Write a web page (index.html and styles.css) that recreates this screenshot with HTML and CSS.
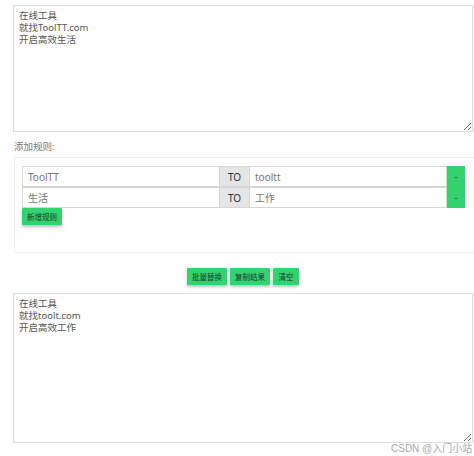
FILE: index.html
```html
<!DOCTYPE html>
<html lang="zh">
  <head>
    <meta charset="UTF-8" />
    <meta name="viewport" content="width=device-width, initial-scale=1.0" />
    <title>批量替换</title>
    <link rel="stylesheet" href="styles.css">
  </head>
  <body>
    <div class="container">
      <textarea class="text-box source">在线工具
就找ToolTT.com
开启高效生活</textarea>

      <div class="label">添加规则:</div>

      <div class="rules">
        <div class="rule-row">
          <input class="rule-input" type="text" value="ToolTT" />
          <span class="addon">TO</span>
          <input class="rule-input" type="text" value="tooltt" />
          <button class="remove-btn">-</button>
        </div>
        <div class="rule-row">
          <input class="rule-input" type="text" value="生活" />
          <span class="addon">TO</span>
          <input class="rule-input" type="text" value="工作" />
          <button class="remove-btn">-</button>
        </div>
        <button class="btn add-btn">新增规则</button>
      </div>

      <div class="actions">
        <button class="btn">批量替换</button>
        <button class="btn">复制结果</button>
        <button class="btn">清空</button>
      </div>

      <textarea class="text-box result">在线工具
就找toolt.com
开启高效工作</textarea>
    </div>
    <div class="watermark">CSDN @入门小站</div>
  </body>
</html>
```

FILE: styles.css
```css
body {
  font-family: "Noto Sans", "Noto Sans CJK SC", sans-serif;
  margin: 0;
  padding: 0;
  background: #fff;
  color: #555;
  overflow: hidden;
}
.container {
  padding: 5px 0 0 13px;
  width: 461px;
}
.text-box {
  display: block;
  box-sizing: border-box;
  width: 460px;
  border: 1px solid #dcdcdc;
  padding: 4px 5px;
  font-family: "Noto Sans", "Noto Sans CJK SC", sans-serif;
  font-size: 9.5px;
  line-height: 12px;
  color: #555;
  resize: vertical;
  margin: 0;
}
.source {
  height: 127px;
}
.result {
  height: 150px;
  margin-top: 8px;
}
.label {
  font-size: 9.5px;
  color: #777;
  margin: 9px 0 0 1px;
  line-height: 12px;
}
.rules {
  box-sizing: border-box;
  margin: 4px 0 0 1px;
  width: 470px;
  height: 96px;
  border: 1px solid #f0f0f0;
  padding: 8px 7px;
}
.rule-row {
  display: flex;
  height: 21px;
}
.rule-input {
  box-sizing: border-box;
  width: 198px;
  height: 21px;
  border: 1px solid #d6d6d6;
  padding: 0 5px;
  font-family: "Noto Sans", "Noto Sans CJK SC", sans-serif;
  font-size: 10px;
  color: #777;
  margin: 0;
}
.addon {
  box-sizing: border-box;
  width: 29px;
  height: 21px;
  background: #e5e5e5;
  border-top: 1px solid #d6d6d6;
  border-bottom: 1px solid #d6d6d6;
  color: #333;
  font-size: 10px;
  display: flex;
  align-items: center;
  justify-content: center;
}
.remove-btn {
  width: 18px;
  height: 21px;
  border: none;
  background: #33d16f;
  color: #1d5a33;
  font-size: 9px;
  padding: 0;
  margin: 0;
}
.btn {
  border: none;
  background: #33d16f;
  color: #1c3a28;
  font-family: "Noto Sans", "Noto Sans CJK SC", sans-serif;
  font-size: 7.5px;
  height: 17px;
  padding: 0 8px;
  border-radius: 1px;
  box-shadow: 0 2px 3px rgba(0, 0, 0, 0.25);
  cursor: pointer;
}
.add-btn {
  display: block;
  margin-top: 0;
  width: 40px;
  padding: 0;
}
.actions {
  display: flex;
  justify-content: center;
  gap: 3px;
  margin-top: 15px;
  width: 460px;
}
.actions .btn {
  width: 40px;
  padding: 0;
}
.actions .btn:last-child {
  width: 26px;
}
.watermark {
  position: absolute;
  left: 391px;
  top: 440px;
  font-size: 10px;
  color: #a8a8a8;
  font-family: "Liberation Sans", "Noto Sans CJK SC", sans-serif;
}
```
